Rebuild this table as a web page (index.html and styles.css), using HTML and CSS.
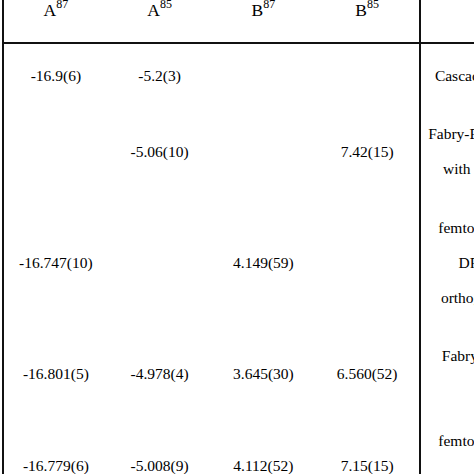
FILE: index.html
```html
<!DOCTYPE html>
<html>
<head>
<meta charset="utf-8">
<link rel="stylesheet" href="styles.css">
</head>
<body>
<div class="table">
  <div class="hd">A<sup>87</sup></div>
  <div class="hd">A<sup>85</sup></div>
  <div class="hd">B<sup>87</sup></div>
  <div class="hd">B<sup>85</sup></div>
  <div class="hd method"></div>

  <div class="val">-16.9(6)</div>
  <div class="val">-5.2(3)</div>
  <div class="val"></div>
  <div class="val"></div>
  <div class="method"><span>Cascade fluorescence methods</span></div>

  <div class="val"></div>
  <div class="val">-5.06(10)</div>
  <div class="val"></div>
  <div class="val">7.42(15)</div>
  <div class="method"><span>Fabry-Perot interferometer and a</span><span>with two-photon excitations</span></div>

  <div class="val">-16.747(10)</div>
  <div class="val"></div>
  <div class="val">4.149(59)</div>
  <div class="val"></div>
  <div class="method"><span>femtosecond frequency comb</span><span>DFCS of cold atoms in</span><span>orthogonally polarized beam</span></div>

  <div class="val">-16.801(5)</div>
  <div class="val">-4.978(4)</div>
  <div class="val">3.645(30)</div>
  <div class="val">6.560(52)</div>
  <div class="method"><span>Fabry-Perot transfer cavities</span><span>and EOM</span></div>

  <div class="val low">-16.779(6)</div>
  <div class="val low">-5.008(9)</div>
  <div class="val low">4.112(52)</div>
  <div class="val low">7.15(15)</div>
  <div class="method"><span>femtosecond frequency comb</span><span>DFCS</span></div>
</div>
</body>
</html>
```

FILE: styles.css
```css
html, body {
  margin: 0;
  padding: 0;
  background: #fff;
  overflow: hidden;
  width: 474px;
  height: 474px;
}

body {
  font-family: "Liberation Serif", "Times New Roman", serif;
  color: #000;
}

.table {
  margin-left: 2px;
  width: 635px;
  border-left: 2px solid #111;
  display: grid;
  grid-template-columns: repeat(4, 103.75px) 220px;
  grid-template-rows: 44px 62px 90px 132px 90px 79px;
}

.table > div {
  box-sizing: border-box;
}

.hd {
  border-bottom: 2px solid #111;
  text-align: center;
  font-size: 17.5px;
  line-height: 17px;
  padding-top: 2px;
}

.hd sup {
  font-size: 12px;
  line-height: 0;
  vertical-align: 8px;
}

.val {
  display: flex;
  align-items: center;
  justify-content: center;
  font-size: 15.5px;
  line-height: 35px;
  white-space: nowrap;
}

.val.low {
  padding-top: 15px;
}

.method {
  border-left: 2px solid #111;
  display: flex;
  flex-direction: column;
  align-items: center;
  justify-content: center;
  font-size: 15.5px;
  line-height: 35px;
  white-space: nowrap;
}
```
